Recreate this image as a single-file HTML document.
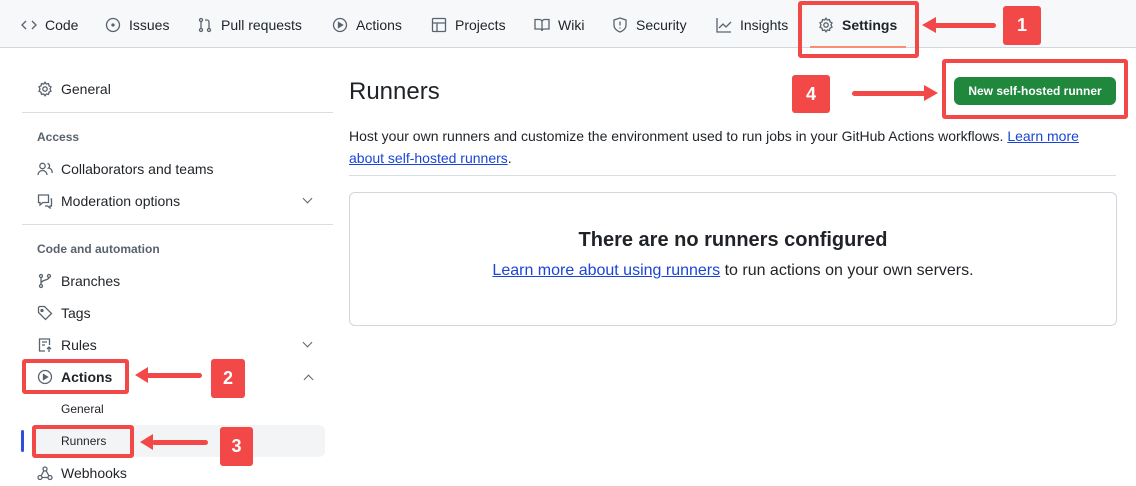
<!DOCTYPE html>
<html><head><meta charset="utf-8"><style>
*{margin:0;padding:0;box-sizing:border-box}
body{width:1136px;height:486px;overflow:hidden;background:#fff;font-family:"Liberation Sans",sans-serif;color:#1f2328;position:relative}
.a{position:absolute;white-space:nowrap}
.hdr{position:absolute;left:0;top:0;width:1136px;height:48px;background:#f6f8fa;border-bottom:1px solid #d0d7de}
.nav{font-size:14px;top:16px;line-height:18px;display:flex;align-items:center;gap:8px}
.nav svg,.si svg{width:16px;height:16px;fill:none;stroke:#59636e;stroke-width:1.3}
.si{font-size:14px;line-height:18px;display:flex;align-items:center;gap:8px;left:37px}
.sh{font-size:12px;font-weight:bold;color:#59636e;left:37px}
.hr{position:absolute;height:1px;background:#d8dee4}
.red{position:absolute;border:4px solid #f24848;border-radius:3px}
.badge{position:absolute;background:#f24848;color:#fff;font-weight:bold;font-size:18px;display:flex;align-items:center;justify-content:center;border-radius:3px}
.arr{position:absolute;height:5px;background:#f24848;border-radius:3px}
.chev{position:absolute;width:7px;height:7px;border-right:1.5px solid #59636e;border-bottom:1.5px solid #59636e}
a{color:#1a45d6;text-decoration:underline}
</style></head><body>
<div class="hdr"></div>
<div class="a nav" style="left:21px"><svg viewBox="0 0 16 16"><path d="M5 4L1 8l4 4M11 4l4 4-4 4"/></svg>Code</div>
<div class="a nav" style="left:105px"><svg viewBox="0 0 16 16"><circle cx="8" cy="8" r="6.5"/><circle cx="8" cy="8" r="1" fill="#59636e"/></svg>Issues</div>
<div class="a nav" style="left:197px"><svg viewBox="0 0 16 16"><circle cx="4" cy="3" r="1.5"/><circle cx="4" cy="13" r="1.5"/><circle cx="12" cy="13" r="1.5"/><path d="M4 4.5v7M12 11.5V5a2 2 0 00-2-2H8"/></svg>Pull requests</div>
<div class="a nav" style="left:332px"><svg viewBox="0 0 16 16"><circle cx="8" cy="8" r="6.5"/><path d="M6.5 5.5l4 2.5-4 2.5z" fill="#59636e"/></svg>Actions</div>
<div class="a nav" style="left:431px"><svg viewBox="0 0 16 16"><rect x="1.5" y="1.5" width="13" height="13" rx="1"/><path d="M1.5 6h13M6 6v8.5"/></svg>Projects</div>
<div class="a nav" style="left:534px"><svg viewBox="0 0 16 16"><path d="M1 2.5h4.5a2.5 2.5 0 012.5 2.5v9a2 2 0 00-2-2H1zM15 2.5h-4.5A2.5 2.5 0 008 5v9a2 2 0 012-2h5z"/></svg>Wiki</div>
<div class="a nav" style="left:612px"><svg viewBox="0 0 16 16"><path d="M8 1l6 2v5c0 3.5-3 6-6 7-3-1-6-3.5-6-7V3z"/><path d="M8 4.5v4M8 10.5v1"/></svg>Security</div>
<div class="a nav" style="left:716px"><svg viewBox="0 0 16 16"><path d="M1 1v14h14M3 11l4-4 3 3 5-5"/></svg>Insights</div>
<div class="a nav" style="left:818px;font-weight:bold"><svg viewBox="0 0 16 16"><circle cx="8" cy="8" r="2.2"/><path d="M8 1.2l1.3 1.8 2.2-.4.5 2.2 2 1-1 2.2 1 2.2-2 1-.5 2.2-2.2-.4L8 14.8l-1.3-1.8-2.2.4-.5-2.2-2-1 1-2.2-1-2.2 2-1 .5-2.2 2.2.4z"/></svg>Settings</div>
<div class="a" style="left:810px;top:46px;width:96px;height:2px;background:#fd8c73"></div>
<div class="red" style="left:798px;top:1px;width:121px;height:57px"></div>
<div class="arr" style="left:934px;top:23px;width:62px"></div>
<div class="a" style="left:922px;top:17px;border-right:14px solid #f24848;border-top:8px solid transparent;border-bottom:8px solid transparent"></div>
<div class="badge" style="left:1003px;top:6px;width:38px;height:39px">1</div>

<div class="a si" style="top:80px"><svg viewBox="0 0 16 16"><circle cx="8" cy="8" r="2.2"/><path d="M8 1.2l1.3 1.8 2.2-.4.5 2.2 2 1-1 2.2 1 2.2-2 1-.5 2.2-2.2-.4L8 14.8l-1.3-1.8-2.2.4-.5-2.2-2-1 1-2.2-1-2.2 2-1 .5-2.2 2.2.4z"/></svg>General</div>
<div class="hr" style="left:22px;top:112px;width:311px"></div>
<div class="a sh" style="top:130px">Access</div>
<div class="a si" style="top:160px"><svg viewBox="0 0 16 16"><circle cx="5.5" cy="5" r="2.7"/><path d="M1 14a4.5 4.5 0 019 0M10.5 2.5a2.5 2.5 0 011 4.5 4 4 0 013.5 5"/></svg>Collaborators and teams</div>
<div class="a si" style="top:192px"><svg viewBox="0 0 16 16"><path d="M1.5 2h10v7.5H6L3 12V9.5H1.5zM13.5 6h1v7H13v2l-2.5-2H8"/></svg>Moderation options</div>
<div class="chev" style="left:304px;top:195px;transform:rotate(45deg)"></div>
<div class="hr" style="left:22px;top:224px;width:311px"></div>
<div class="a sh" style="top:242px">Code and automation</div>
<div class="a si" style="top:272px"><svg viewBox="0 0 16 16"><circle cx="4" cy="3" r="1.5"/><circle cx="4" cy="13" r="1.5"/><circle cx="12" cy="3" r="1.5"/><path d="M4 4.5v7M12 4.5c0 3-8 2-8 6"/></svg>Branches</div>
<div class="a si" style="top:304px"><svg viewBox="0 0 16 16"><path d="M1.5 2.5v5l7 7 6-6-7-7h-5z"/><circle cx="5" cy="5.5" r="1" fill="#59636e"/></svg>Tags</div>
<div class="a si" style="top:336px"><svg viewBox="0 0 16 16"><path d="M8 14H2.5V2h10v6M5 5h5M5 8h3M12 15v-5M10 12l2-2 2 2"/></svg>Rules</div>
<div class="chev" style="left:304px;top:339px;transform:rotate(45deg)"></div>
<div class="a si" style="top:368px;font-weight:bold"><svg viewBox="0 0 16 16"><circle cx="8" cy="8" r="6.5"/><path d="M6.5 5.5l4 2.5-4 2.5z" fill="#59636e"/></svg>Actions</div>
<div class="chev" style="left:305px;top:376px;transform:rotate(225deg)"></div>
<div class="a" style="left:61px;top:402px;font-size:12px">General</div>
<div class="a" style="left:33px;top:425px;width:292px;height:32px;background:#f2f4f6;border-radius:6px"></div>
<div class="a" style="left:21px;top:430px;width:3px;height:22px;background:#2f4ee0;border-radius:2px"></div>
<div class="a" style="left:61px;top:434px;font-size:12px">Runners</div>
<div class="a si" style="top:464px"><svg viewBox="0 0 16 16"><circle cx="8" cy="4" r="2"/><circle cx="3" cy="12.5" r="2"/><circle cx="13" cy="12.5" r="2"/><path d="M7 5.5L4 11M9 5.5l3 5.5M5 12.5h6"/></svg>Webhooks</div>

<div class="red" style="left:22px;top:359px;width:107px;height:35px"></div>
<div class="arr" style="left:146px;top:373px;width:56px"></div>
<div class="a" style="left:135px;top:367px;border-right:13px solid #f24848;border-top:8px solid transparent;border-bottom:8px solid transparent"></div>
<div class="badge" style="left:211px;top:359px;width:34px;height:39px">2</div>
<div class="red" style="left:32px;top:425px;width:102px;height:33px"></div>
<div class="arr" style="left:152px;top:440px;width:56px"></div>
<div class="a" style="left:140px;top:434px;border-right:13px solid #f24848;border-top:8px solid transparent;border-bottom:8px solid transparent"></div>
<div class="badge" style="left:220px;top:427px;width:33px;height:39px">3</div>

<div class="a" style="left:349px;top:78px;font-size:24px">Runners</div>
<div class="a" style="left:349px;top:125px;font-size:14px;line-height:22px;color:#1f2328;white-space:normal;width:762px">Host your own runners and customize the environment used to run jobs in your GitHub Actions workflows. <a>Learn more about self-hosted runners</a>.</div>
<div class="hr" style="left:349px;top:175px;width:767px"></div>
<div class="a" style="left:349px;top:192px;width:768px;height:134px;border:1px solid #d0d7de;border-radius:6px"></div>
<div class="a" style="left:349px;top:229px;width:768px;text-align:center;font-size:20px;font-weight:bold">There are no runners configured</div>
<div class="a" style="left:349px;top:262px;width:768px;text-align:center;font-size:16px"><a>Learn more about using runners</a> to run actions on your own servers.</div>

<div class="a" style="left:954px;top:77px;width:162px;height:28px;background:#1f883d;border-radius:6px;color:#fff;font-size:12px;font-weight:bold;display:flex;align-items:center;justify-content:center">New self-hosted runner</div>
<div class="red" style="left:942px;top:59px;width:186px;height:60px"></div>
<div class="badge" style="left:792px;top:75px;width:38px;height:38px">4</div>
<div class="arr" style="left:852px;top:91px;width:74px"></div>
<div class="a" style="left:924px;top:85px;border-left:14px solid #f24848;border-top:8px solid transparent;border-bottom:8px solid transparent"></div>
</body></html>
